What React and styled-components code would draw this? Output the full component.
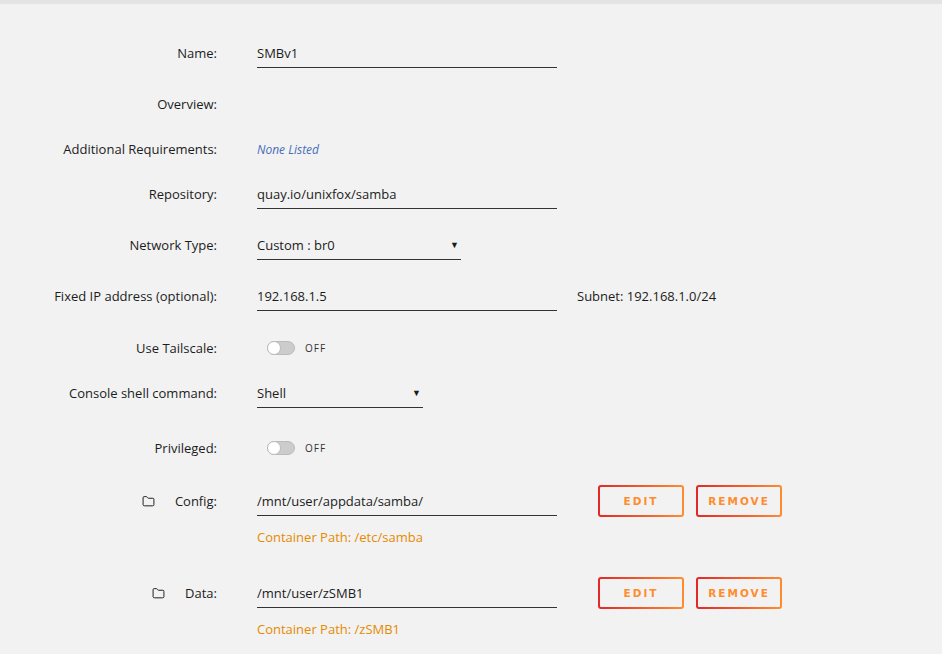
import styled, { createGlobalStyle } from "styled-components";
import { Folder } from "lucide-react";

const Global = createGlobalStyle`
  body {
    margin: 0;
    background: #f2f2f2;
    font-family: "Open Sans", "Liberation Sans", sans-serif;
    font-size: 13px;
    color: #1c1c1c;
  }
`

const TopStrip = styled.div`
  height: 4px;
  background: #e4e4e4;
`

const Form = styled.div`
  display: flex;
  flex-direction: column;
  padding-top: 34px;
`

const Row = styled.div`
  display: flex;
  align-items: flex-start;
  margin-top: ${(p) => p.gap || 0}px;
`

const Label = styled.div`
  width: 217px;
  height: 30px;
  display: flex;
  align-items: center;
  justify-content: flex-end;
  gap: 20px;
  flex-shrink: 0;
`

const Field = styled.div`
  margin-left: 40px;
  display: flex;
  flex-direction: column;
`

const Line = styled.div`
  display: flex;
  align-items: center;
  height: 30px;
`

const Input = styled.div`
  width: ${(p) => p.w || 300}px;
  height: 30px;
  box-sizing: border-box;
  border-bottom: 1px solid #333;
  display: flex;
  align-items: center;
  justify-content: space-between;
  padding-right: 2px;
`

const Caret = styled.span`
  font-size: 9px;
`

const Note = styled.span`
  color: #486dba;
  font-style: italic;
  font-size: 12px;
`

const Side = styled.span`
  margin-left: 20px;
`

const Toggle = styled.div`
  margin-left: 10px;
  width: 26px;
  height: 12px;
  border-radius: 7px;
  background: #ccc;
  border: 1px solid #bbb;
  position: relative;
  &::after {
    content: "";
    position: absolute;
    left: -1px;
    top: -1px;
    width: 12px;
    height: 12px;
    border-radius: 50%;
    background: #fff;
    border: 1px solid #bbb;
  }
`

const ToggleText = styled.span`
  margin-left: 10px;
  font-size: 10px;
  letter-spacing: 1px;
  color: #333;
`

const Button = styled.button`
  width: 86px;
  height: 32px;
  margin-left: ${(p) => p.ml}px;
  border: 2px solid transparent;
  border-radius: 3px;
  background: linear-gradient(#f2f2f2, #f2f2f2) padding-box,
    linear-gradient(90deg, #e22828, #ff8c2f) border-box;
  color: #ff8c2f;
  font-family: "DejaVu Sans", sans-serif;
  font-weight: bold;
  font-size: 10.5px;
  letter-spacing: 2px;
  cursor: pointer;
`

const PathNote = styled.div`
  color: #e68a00;
  height: 30px;
  display: flex;
  align-items: center;
  margin-top: 6px;
`

const PathRow = ({ gap, name, value, container }) => (
  <Row gap={gap}>
    <Label>
      <Folder size={13} strokeWidth={1.8} />
      {name}:
    </Label>
    <Field>
      <Line>
        <Input>{value}</Input>
        <Button ml={41}>EDIT</Button>
        <Button ml={12}>REMOVE</Button>
      </Line>
      <PathNote>Container Path: {container}</PathNote>
    </Field>
  </Row>
)

export default function App() {
  return (
    <>
      <Global />
      <TopStrip />
      <Form>
        <Row>
          <Label>Name:</Label>
          <Field><Input>SMBv1</Input></Field>
        </Row>
        <Row gap={21}>
          <Label>Overview:</Label>
        </Row>
        <Row gap={15}>
          <Label>Additional Requirements:</Label>
          <Field><Line><Note>None Listed</Note></Line></Field>
        </Row>
        <Row gap={15}>
          <Label>Repository:</Label>
          <Field><Input>quay.io/unixfox/samba</Input></Field>
        </Row>
        <Row gap={21}>
          <Label>Network Type:</Label>
          <Field><Input w={204}>Custom : br0<Caret>▼</Caret></Input></Field>
        </Row>
        <Row gap={21}>
          <Label>Fixed IP address (optional):</Label>
          <Field>
            <Line>
              <Input>192.168.1.5</Input>
              <Side>Subnet: 192.168.1.0/24</Side>
            </Line>
          </Field>
        </Row>
        <Row gap={22}>
          <Label>Use Tailscale:</Label>
          <Field><Line><Toggle /><ToggleText>OFF</ToggleText></Line></Field>
        </Row>
        <Row gap={15}>
          <Label>Console shell command:</Label>
          <Field><Input w={166}>Shell<Caret>▼</Caret></Input></Field>
        </Row>
        <Row gap={25}>
          <Label>Privileged:</Label>
          <Field><Line><Toggle /><ToggleText>OFF</ToggleText></Line></Field>
        </Row>
        <PathRow gap={23} name="Config" value="/mnt/user/appdata/samba/" container="/etc/samba" />
        <PathRow gap={26} name="Data" value="/mnt/user/zSMB1" container="/zSMB1" />
      </Form>
    </>
  )
}
